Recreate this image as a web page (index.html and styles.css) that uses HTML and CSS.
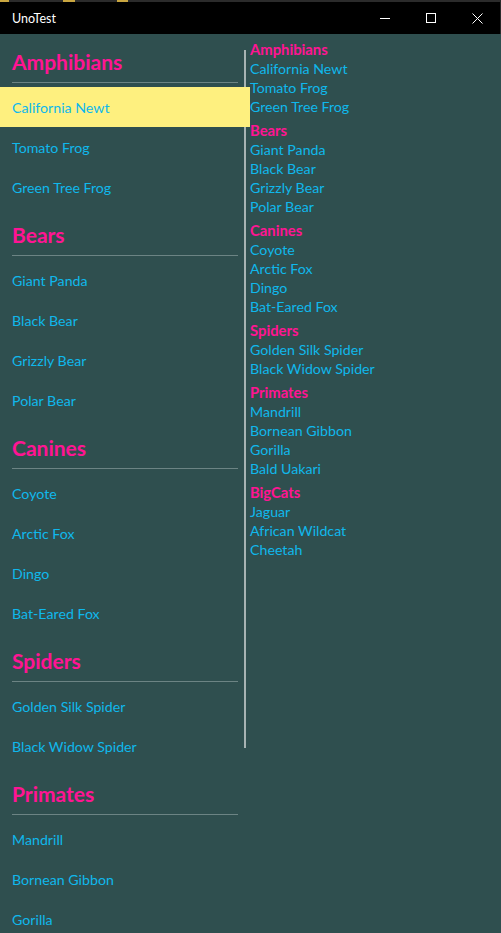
FILE: index.html
```html
<!DOCTYPE html>
<html>
<head>
<meta charset="utf-8">
<link rel="stylesheet" href="styles.css">
</head>
<body>
<div class="topstrip"><span class="mark m1"></span><span class="mark m2"></span><span class="mark m3"></span></div>
<header class="titlebar">
  <div class="title">UnoTest</div>
  <div class="controls">
    <div class="ctl"><svg width="10" height="10" viewBox="0 0 10 10"><path d="M0 5.5H10" stroke="#fff" stroke-width="1"/></svg></div>
    <div class="ctl"><svg width="10" height="10" viewBox="0 0 10 10"><rect x="0.5" y="0.5" width="9" height="9" fill="none" stroke="#fff" stroke-width="1"/></svg></div>
    <div class="ctl"><svg width="11" height="11" viewBox="0 0 11 11"><path d="M0.5 0.5L10.5 10.5M10.5 0.5L0.5 10.5" stroke="#fff" stroke-width="1"/></svg></div>
  </div>
</header>
<main class="content">
  <section class="left">
    <div class="scrollbar"></div>
    <div class="lhead">Amphibians</div>
    <div class="litem selected">California Newt</div>
    <div class="litem">Tomato Frog</div>
    <div class="litem">Green Tree Frog</div>
    <div class="lhead">Bears</div>
    <div class="litem">Giant Panda</div>
    <div class="litem">Black Bear</div>
    <div class="litem">Grizzly Bear</div>
    <div class="litem">Polar Bear</div>
    <div class="lhead">Canines</div>
    <div class="litem">Coyote</div>
    <div class="litem">Arctic Fox</div>
    <div class="litem">Dingo</div>
    <div class="litem">Bat-Eared Fox</div>
    <div class="lhead">Spiders</div>
    <div class="litem">Golden Silk Spider</div>
    <div class="litem">Black Widow Spider</div>
    <div class="lhead">Primates</div>
    <div class="litem">Mandrill</div>
    <div class="litem">Bornean Gibbon</div>
    <div class="litem">Gorilla</div>
  </section>
  <section class="right">
    <div class="group">
      <div class="rhead">Amphibians</div>
      <div class="ritem">California Newt</div>
      <div class="ritem">Tomato Frog</div>
      <div class="ritem">Green Tree Frog</div>
    </div>
    <div class="group">
      <div class="rhead">Bears</div>
      <div class="ritem">Giant Panda</div>
      <div class="ritem">Black Bear</div>
      <div class="ritem">Grizzly Bear</div>
      <div class="ritem">Polar Bear</div>
    </div>
    <div class="group">
      <div class="rhead">Canines</div>
      <div class="ritem">Coyote</div>
      <div class="ritem">Arctic Fox</div>
      <div class="ritem">Dingo</div>
      <div class="ritem">Bat-Eared Fox</div>
    </div>
    <div class="group">
      <div class="rhead">Spiders</div>
      <div class="ritem">Golden Silk Spider</div>
      <div class="ritem">Black Widow Spider</div>
    </div>
    <div class="group">
      <div class="rhead">Primates</div>
      <div class="ritem">Mandrill</div>
      <div class="ritem">Bornean Gibbon</div>
      <div class="ritem">Gorilla</div>
      <div class="ritem">Bald Uakari</div>
    </div>
    <div class="group">
      <div class="rhead">BigCats</div>
      <div class="ritem">Jaguar</div>
      <div class="ritem">African Wildcat</div>
      <div class="ritem">Cheetah</div>
    </div>
  </section>
</main>
</body>
</html>
```
FILE: styles.css
```css
html, body {
  margin: 0;
  padding: 0;
}
body {
  width: 501px;
  height: 933px;
  overflow: hidden;
  background: #2f4f4f;
  font-family: "Lato", "Liberation Sans", sans-serif;
}
.topstrip {
  height: 2px;
  background: #2b2b2b;
  display: flex;
}
.mark {
  height: 2px;
  background: #c9a640;
}
.m1 { width: 9px; }
.m2 { width: 12px; margin-left: 54px; }
.m3 { width: 11px; margin-left: 42px; }
.titlebar {
  height: 32px;
  background: #000;
  display: flex;
  align-items: center;
  justify-content: space-between;
  border-right: 1px solid #2b2b2b;
}
.title {
  color: #fff;
  font-size: 12.5px;
  padding-left: 12px;
}
.controls {
  display: flex;
  height: 100%;
}
.ctl {
  width: 46px;
  height: 100%;
  display: flex;
  align-items: center;
  justify-content: center;
}
.content {
  display: flex;
  align-items: flex-start;
  height: 899px;
  overflow: hidden;
}
.left {
  width: 250px;
  height: 899px;
  overflow: hidden;
  flex: none;
  position: relative;
}
.scrollbar {
  position: absolute;
  left: 244px;
  top: 16px;
  width: 2px;
  height: 698px;
  background: #a7b3b3;
  z-index: 0;
}
.lhead {
  margin: 0 12px 4px 12px;
  height: 49px;
  box-sizing: border-box;
  padding-top: 14px;
  line-height: 28px;
  font-size: 21px;
  font-weight: bold;
  color: #ff1493;
  border-bottom: 1px solid #6c8484;
}
.litem {
  height: 40px;
  line-height: 41px;
  padding-left: 12px;
  font-size: 14.2px;
  color: #0fb8ec;
  position: relative;
}
.litem.selected {
  background: #fef07f;
  z-index: 1;
}
.right {
  padding-top: 6px;
  display: flex;
  flex-direction: column;
  gap: 5px;
}
.rhead {
  font-size: 14.8px;
  font-weight: bold;
  line-height: 19px;
  color: #ff1493;
}
.ritem {
  font-size: 14.2px;
  line-height: 19px;
  color: #0fb8ec;
}
```
